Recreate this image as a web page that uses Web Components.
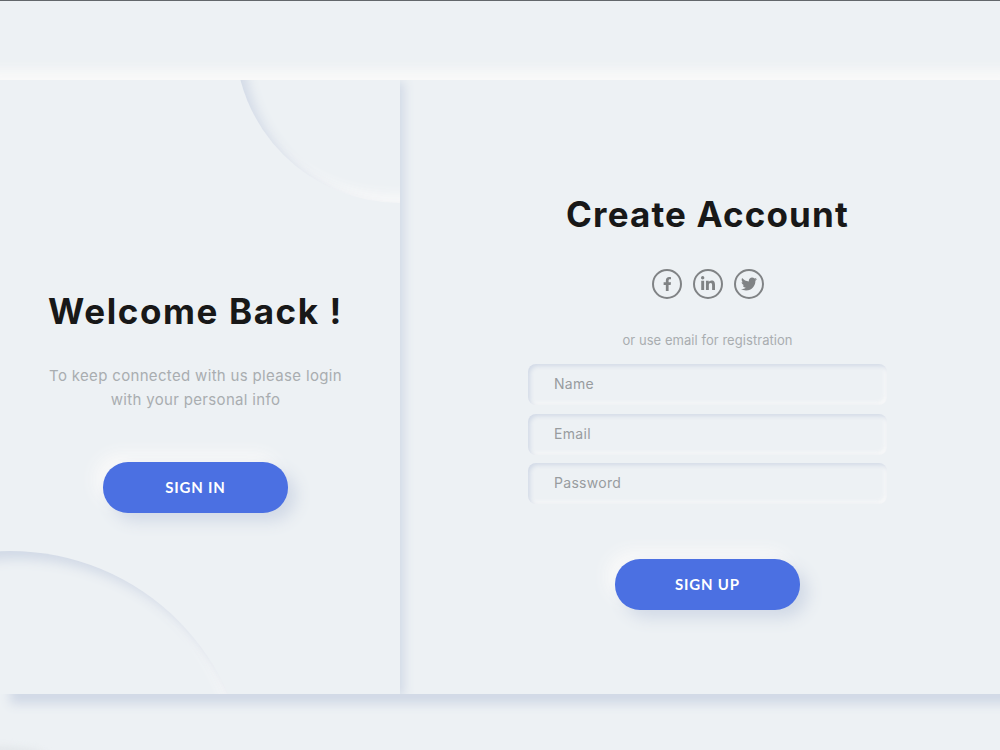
<!DOCTYPE html>
<html>
<head>
<meta charset="utf-8">
<title>Create Account</title>
<style>
  html, body { margin: 0; height: 100%; background: #edf1f4; overflow: hidden; }
  body { font-family: "Inter", "Liberation Sans", sans-serif; }
</style>
</head>
<body>
<auth-page>
  <auth-card>
    <welcome-panel slot="left"></welcome-panel>
    <signup-panel slot="right"></signup-panel>
  </auth-card>
</auth-page>

<script>
class AuthPage extends HTMLElement {
  constructor() {
    super();
    this.attachShadow({ mode: 'open' });
    this.shadowRoot.innerHTML = `
      <style>
        :host { display: block; height: 750px; overflow: hidden; position: relative; background: #edf1f4; }
        .topline { height: 1px; background: #63676b; }
        .topgap { height: 79px; }
        .corner {
          position: absolute; left: -50px; bottom: -22px;
          width: 100px; height: 26px; border-radius: 50%;
          background: #e3e7ea; filter: blur(3px);
        }
      </style>
      <div class="topline"></div>
      <div class="topgap"></div>
      <slot></slot>
      <div class="corner"></div>
    `;
  }
}

class AuthCard extends HTMLElement {
  constructor() {
    super();
    this.attachShadow({ mode: 'open' });
    this.shadowRoot.innerHTML = `
      <style>
        :host {
          display: grid;
          grid-template-columns: 400px 600px;
          width: 1020px;
          height: 614px;
          background: #edf1f4;
          box-shadow: 10px 10px 10px #d1d9e6, -10px -10px 10px #f9f9f9;
        }
      </style>
      <slot name="left"></slot>
      <slot name="right"></slot>
    `;
  }
}

class WelcomePanel extends HTMLElement {
  constructor() {
    super();
    this.attachShadow({ mode: 'open' });
    this.shadowRoot.innerHTML = `
      <style>
        :host {
          display: flex;
          flex-direction: column;
          align-items: center;
          position: relative;
          z-index: 2;
          height: 614px;
          box-sizing: border-box;
          padding: 209px 9px 0 0;
          background: #edf1f4;
          box-shadow: 4px 2px 10px #d1d9e6;
          clip-path: inset(0 -20px 0 0);
        }
        .shapes { position: absolute; inset: 0; overflow: hidden; }
        .circle { position: absolute; border-radius: 50%; background: #edf1f4; }
        .c1 {
          left: 235px; top: -207px; width: 330px; height: 330px;
          box-shadow: inset 8px 8px 12px #d1d9e6, inset -8px -8px 12px #f9f9f9;
        }
        .c2 {
          left: -228px; top: 471px; width: 476px; height: 476px;
          box-shadow: inset 8px 8px 12px #d1d9e6, inset -8px -8px 12px #f9f9f9;
        }
        h2 {
          position: relative; margin: 0; font-size: 35px; line-height: 44px; font-weight: 700;
          color: #181818; letter-spacing: 1.6px;
        }
        p {
          position: relative; margin: 31px 0 0; font-size: 15px; line-height: 24px; font-weight: 400;
          color: #a9adb0; text-align: center; letter-spacing: .33px;
        }
        neu-button { margin-top: 50px; }
      </style>
      <div class="shapes"><div class="circle c1"></div><div class="circle c2"></div></div>
      <h2>Welcome Back !</h2>
      <p>To keep connected with us please login<br>with your personal info</p>
      <neu-button>SIGN IN</neu-button>
    `;
  }
}

class SocialIcon extends HTMLElement {
  static paths = {
    facebook: ['0 0 320 512', 'M279.14 288l14.22-92.66h-88.91v-60.13c0-25.35 12.42-50.06 52.24-50.06h40.42V6.26S260.43 0 225.36 0c-73.22 0-121.08 44.38-121.08 124.72v70.62H22.89V288h81.39v224h100.17V288z'],
    linkedin: ['0 0 448 512', 'M100.28 448H7.4V148.9h92.88zM53.79 108.1C24.09 108.1 0 83.5 0 53.8a53.79 53.79 0 0 1 107.58 0c0 29.7-24.1 54.3-53.79 54.3zM447.9 448h-92.68V302.4c0-34.7-.7-79.2-48.29-79.2-48.29 0-55.69 37.7-55.69 76.7V448h-92.78V148.9h89.08v40.8h1.3c12.4-23.5 42.69-48.3 87.88-48.3 94 0 111.28 61.9 111.28 142.3V448z'],
    twitter: ['0 0 512 512', 'M459.37 151.716c.325 4.548.325 9.097.325 13.645 0 138.72-105.583 298.558-298.558 298.558-59.452 0-114.68-17.219-161.137-47.106 8.447.974 16.568 1.299 25.34 1.299 49.055 0 94.213-16.568 130.274-44.832-46.132-.975-84.792-31.188-98.112-72.772 6.498.974 12.995 1.624 19.818 1.624 9.421 0 18.843-1.3 27.614-3.573-48.081-9.747-84.143-51.98-84.143-102.985v-1.299c13.969 7.797 30.214 12.67 47.431 13.319-28.264-18.843-46.781-51.005-46.781-87.391 0-19.492 5.197-37.36 14.294-52.954 51.655 63.675 129.3 105.258 216.365 109.807-1.624-7.797-2.599-15.918-2.599-24.04 0-57.828 46.782-104.934 104.934-104.934 30.213 0 57.502 12.67 76.67 33.137 23.715-4.548 46.456-13.32 66.599-25.34-7.798 24.366-24.366 44.833-46.132 57.827 21.117-2.273 41.584-8.122 60.426-16.243-14.292 20.791-32.161 39.308-52.628 54.253z']
  };
  constructor() {
    super();
    this.attachShadow({ mode: 'open' });
  }
  connectedCallback() {
    const [box, d] = SocialIcon.paths[this.getAttribute('name')];
    const size = this.getAttribute('size') || 14;
    this.shadowRoot.innerHTML = `
      <style>
        :host {
          display: flex; align-items: center; justify-content: center;
          width: 30px; height: 30px; box-sizing: border-box;
          border: 2px solid #808385; border-radius: 50%;
        }
        svg { display: block; fill: #808385; }
      </style>
      <svg viewBox="${box}" height="${size}"><path d="${d}"/></svg>
    `;
  }
}

class NeuField extends HTMLElement {
  constructor() {
    super();
    this.attachShadow({ mode: 'open' });
    this.shadowRoot.innerHTML = `
      <style>
        :host {
          display: flex; align-items: center;
          width: 359px; height: 41px; box-sizing: border-box;
          padding: 0 0 2px 26px;
          border-radius: 8px;
          background: #edf1f4;
          box-shadow: inset 2px 2px 4px #d1d9e6, inset -2px -2px 4px #f9f9f9;
          font-size: 14px; font-weight: 400; letter-spacing: .3px; color: #989c9f;
        }
      </style>
      <slot></slot>
    `;
  }
}

class NeuButton extends HTMLElement {
  constructor() {
    super();
    this.attachShadow({ mode: 'open' });
    this.shadowRoot.innerHTML = `
      <style>
        :host {
          display: flex; align-items: center; justify-content: center;
          position: relative;
          width: 185px; height: 51px; box-sizing: border-box;
          padding-bottom: 2px;
          border-radius: 25px;
          background: #4b70e2;
          box-shadow: 8px 8px 16px #d1d9e6, -8px -8px 16px #f9f9f9;
          font-family: "Lato", "Liberation Sans", sans-serif;
          font-size: 15px; font-weight: 700; letter-spacing: .8px; color: #fff;
        }
      </style>
      <slot></slot>
    `;
  }
}

class SignupPanel extends HTMLElement {
  constructor() {
    super();
    this.attachShadow({ mode: 'open' });
    this.shadowRoot.innerHTML = `
      <style>
        :host {
          display: flex;
          flex-direction: column;
          align-items: center;
          height: 614px;
          box-sizing: border-box;
          padding: 112px 0 0 15px;
          background: #edf1f4;
        }
        h2 {
          margin: 0; font-size: 35px; line-height: 44px; font-weight: 700;
          color: #181818; letter-spacing: 1.15px;
        }
        .social { display: flex; gap: 11px; margin: 33px 0 0 1px; }
        span {
          margin-top: 32px; font-size: 13px; line-height: 18px; font-weight: 400;
          letter-spacing: .05px; color: #a9adb0;
        }
        form { display: flex; flex-direction: column; gap: 8.5px; margin-top: 15px; }
        neu-button { margin-top: 55px; }
      </style>
      <h2>Create Account</h2>
      <div class="social">
        <social-icon name="facebook" size="14"></social-icon>
        <social-icon name="linkedin" size="16"></social-icon>
        <social-icon name="twitter" size="16"></social-icon>
      </div>
      <span>or use email for registration</span>
      <form>
        <neu-field>Name</neu-field>
        <neu-field>Email</neu-field>
        <neu-field>Password</neu-field>
      </form>
      <neu-button>SIGN UP</neu-button>
    `;
  }
}

customElements.define('social-icon', SocialIcon);
customElements.define('neu-field', NeuField);
customElements.define('neu-button', NeuButton);
customElements.define('welcome-panel', WelcomePanel);
customElements.define('signup-panel', SignupPanel);
customElements.define('auth-card', AuthCard);
customElements.define('auth-page', AuthPage);
</script>
</body>
</html>
